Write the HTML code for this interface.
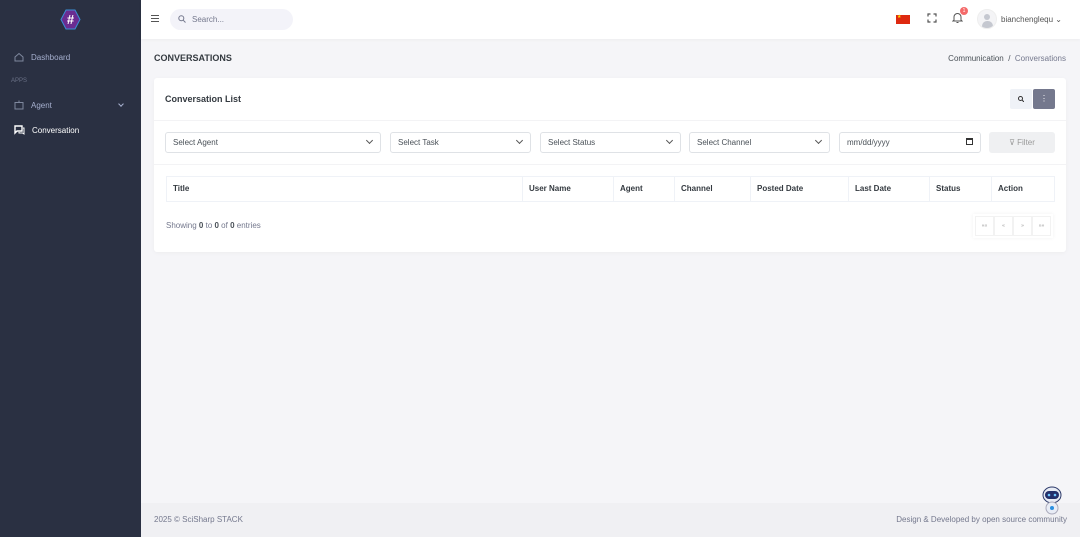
<!DOCTYPE html>
<html><head><meta charset="utf-8"><style>
*{box-sizing:border-box;margin:0;padding:0}
body{width:1080px;height:537px;overflow:hidden;font-family:"Liberation Sans",sans-serif;background:#f5f5f8;color:#495057;position:relative;font-size:8px}
.sb{position:absolute;left:0;top:0;width:141px;height:537px;background:#2a3042}
.top{position:absolute;left:141px;top:0;right:0;height:39px;background:#fff;box-shadow:0 1px 3px rgba(0,0,0,.04)}
.nav{position:absolute;left:14px;font-size:8px;color:#a6b0cf;display:flex;align-items:center;gap:7px}
.card{position:absolute;left:154px;top:78px;width:912px;height:174px;background:#fff;border-radius:3px;box-shadow:0 1px 4px rgba(0,0,0,.04)}
.sel{position:absolute;top:54px;height:21px;border:1px solid #dfe2e6;border-radius:3px;font-size:8px;color:#495057;padding:5px 7px}
.sel i{position:absolute;right:8px;top:5px;width:5px;height:5px;border-right:1px solid #555;border-bottom:1px solid #555;transform:rotate(45deg)}
.th{position:absolute;top:98px;left:12px;width:889px;height:26px;border:1px solid #eff2f7}
.th div{position:absolute;top:0;height:24px;border-left:1px solid #eff2f7;font-weight:bold;font-size:8px;color:#343a40;padding:7px 6px}
.pg{position:absolute;top:136px;left:819px;width:80px;height:24px;box-shadow:0 0 4px rgba(0,0,0,.06);display:flex;padding:2px}
.pg span{flex:1;border:1px solid #f2f2f2;font-size:5px;color:#999;text-align:center;line-height:18px}
</style></head><body>
<div class="sb">
 <svg style="position:absolute;left:60px;top:9px" width="21" height="21" viewBox="0 0 21 21"><polygon points="6,1 15,1 20,10.5 15,20 6,20 1,10.5" fill="#6a2c91" stroke="#3a8fd6" stroke-width="1"/><text x="10.5" y="15" text-anchor="middle" fill="#fff" font-size="13" font-weight="bold" font-family="Liberation Sans">#</text></svg>
 <div class="nav" style="top:52px"><svg width="10" height="10" viewBox="0 0 10 10"><path d="M1 5L5 1.5 9 5V9H1Z" fill="none" stroke="#7f889e" stroke-width="1"/></svg><span>Dashboard</span></div>
 <div style="position:absolute;left:11px;top:78px;font-size:6px;color:#6a7187">APPS</div>
 <div class="nav" style="top:100px"><svg width="10" height="10" viewBox="0 0 10 10"><rect x="1" y="2.5" width="8" height="6.5" fill="none" stroke="#7f889e"/><path d="M5 0.5V2.5" stroke="#7f889e"/></svg><span>Agent</span></div>
 <div style="position:absolute;left:119px;top:102px;width:4px;height:4px;border-right:1px solid #a6b0cf;border-bottom:1px solid #a6b0cf;transform:rotate(45deg)"></div>
 <div class="nav" style="top:125px;color:#fff"><svg width="11" height="10" viewBox="0 0 11 10"><path d="M1 1H8V6H3L1 8Z" fill="none" stroke="#fff" stroke-width="1.4"/><path d="M9 3H10V9L8.5 8H5V7" fill="none" stroke="#fff" stroke-width="1"/></svg><span>Conversation</span></div>
</div>
<div class="top">
 <div style="position:absolute;left:10px;top:15px;width:8px;height:7px;border-top:1.3px solid #555;border-bottom:1.3px solid #555"><div style="margin-top:1.6px;border-top:1.3px solid #555"></div></div>
 <div style="position:absolute;left:29px;top:9px;width:123px;height:21px;background:#f3f3f9;border-radius:11px;font-size:8px;color:#74788d;padding:6px 0 0 22px">Search...</div>
 <svg style="position:absolute;left:37px;top:15px" width="8" height="8"><circle cx="3.3" cy="3.3" r="2.5" fill="none" stroke="#74788d"/><path d="M5.2 5.2L7.5 7.5" stroke="#74788d"/></svg>
 <div style="position:absolute;left:755px;top:15px;width:14px;height:9px;background:#de2910"><span style="position:absolute;left:1px;top:-1px;color:#ffde00;font-size:5px">★</span></div>
 <svg style="position:absolute;left:786px;top:13px" width="10" height="10" viewBox="0 0 10 10"><path d="M1 3.5V1H3.5M6.5 1H9V3.5M9 6.5V9H6.5M3.5 9H1V6.5" fill="none" stroke="#555" stroke-width="1.2"/></svg>
 <svg style="position:absolute;left:811px;top:12px" width="11" height="12" viewBox="0 0 11 12"><path d="M2 8V5A3.5 3.5 0 0 1 9 5V8L10 9H1Z M4.5 10.5H6.5" fill="none" stroke="#555" stroke-width="1"/></svg>
 <div style="position:absolute;left:819px;top:7px;width:8px;height:8px;border-radius:50%;background:#f46a6a;color:#fff;font-size:5px;text-align:center;line-height:8px">1</div>
 <div style="position:absolute;left:836px;top:9px;width:20px;height:20px;border-radius:50%;background:#f4f4f6;border:1px solid #eee;overflow:hidden"><div style="margin:4px auto 0;width:6px;height:6px;border-radius:50%;background:#c5c8d0"></div><div style="margin:1px auto;width:11px;height:8px;border-radius:5px 5px 0 0;background:#c5c8d0"></div></div>
 <div style="position:absolute;left:860px;top:15px;font-size:8px;color:#555">bianchenglequ ⌄</div>
</div>
<div style="position:absolute;left:154px;top:53px;font-size:9px;font-weight:bold;color:#343a40">CONVERSATIONS</div>
<div style="position:absolute;right:14px;top:54px;font-size:8px;color:#495057">Communication &nbsp;/ <span style="color:#74788d">&nbsp;Conversations</span></div>
<div class="card">
 <div style="position:absolute;left:11px;top:16px;font-size:9px;font-weight:bold;color:#343a40">Conversation List</div>
 <div style="position:absolute;left:856px;top:11px;width:22px;height:20px;background:#eff2f7;border-radius:2px"><svg style="margin:7px 8px" width="6" height="6"><circle cx="2.5" cy="2.5" r="2" fill="none" stroke="#333"/><path d="M4 4L6 6" stroke="#333"/></svg></div>
 <div style="position:absolute;left:879px;top:11px;width:22px;height:20px;background:#74788d;border-radius:2px;color:#fff;font-size:8px;text-align:center;line-height:20px">⋮</div>
 <div style="position:absolute;left:0;right:0;top:42px;border-top:1px solid #f3f3f5"></div>
 <div class="sel" style="left:11px;width:216px">Select Agent<i></i></div>
 <div class="sel" style="left:236px;width:141px">Select Task<i></i></div>
 <div class="sel" style="left:386px;width:141px">Select Status<i></i></div>
 <div class="sel" style="left:535px;width:141px">Select Channel<i></i></div>
 <div class="sel" style="left:685px;width:142px">mm/dd/yyyy<span style="position:absolute;right:7px;top:5px;width:7px;height:7px;border:1px solid #333;border-top-width:2px"></span></div>
 <div style="position:absolute;left:835px;top:54px;width:66px;height:21px;background:#eff0f2;border-radius:3px;font-size:8px;color:#999;text-align:center;line-height:21px">⊽ Filter</div>
 <div style="position:absolute;left:0;right:0;top:86px;border-top:1px solid #f3f3f5"></div>
 <div class="th">
  <div style="left:0;border:0;width:355px">Title</div>
  <div style="left:355px;width:91px">User Name</div>
  <div style="left:446px;width:61px">Agent</div>
  <div style="left:507px;width:76px">Channel</div>
  <div style="left:583px;width:98px">Posted Date</div>
  <div style="left:681px;width:81px">Last Date</div>
  <div style="left:762px;width:62px">Status</div>
  <div style="left:824px;width:63px">Action</div>
 </div>
 <div style="position:absolute;left:12px;top:143px;font-size:8px;color:#74788d">Showing <b style="color:#495057">0</b> to <b style="color:#495057">0</b> of <b style="color:#495057">0</b> entries</div>
 <div class="pg"><span>««</span><span>«</span><span>»</span><span>»»</span></div>
</div>
<div style="position:absolute;left:141px;top:503px;right:0;height:34px;background:#f0f0f3">
 <div style="position:absolute;left:13px;top:12px;font-size:8px;color:#74788d">2025 © SciSharp STACK</div>
 <div style="position:absolute;right:13px;top:12px;font-size:8px;color:#74788d">Design &amp; Developed by open source community</div>
</div>
<svg style="position:absolute;left:1039px;top:485px" width="26" height="32" viewBox="0 0 26 32"><ellipse cx="13" cy="10" rx="9" ry="8" fill="#e8ecf5" stroke="#2d3a6a"/><rect x="6" y="6" width="14" height="8" rx="4" fill="#24306b"/><circle cx="10" cy="10" r="1.3" fill="#6ec6ff"/><circle cx="16" cy="10" r="1.3" fill="#6ec6ff"/><ellipse cx="13" cy="23" rx="6" ry="6" fill="#e8ecf5" stroke="#aab"/><circle cx="13" cy="23" r="2" fill="#2b8fe0"/></svg>
</body></html>
